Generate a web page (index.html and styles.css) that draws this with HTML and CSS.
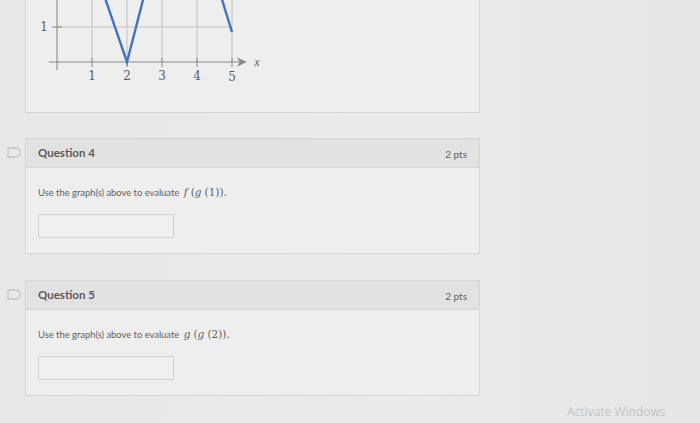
FILE: index.html
```
<!DOCTYPE html>
<html>
<head>
<meta charset="utf-8">
<link rel="stylesheet" href="styles.css">
</head>
<body>
<div class="page">
  <div class="row">
    <div class="gutter"></div>
    <div class="card graph-card">
      <svg class="graph" width="455" height="112" viewBox="25 0 455 112">
        <g class="grid">
          <line x1="91" y1="0" x2="91" y2="62"/>
          <line x1="126" y1="0" x2="126" y2="62"/>
          <line x1="161" y1="0" x2="161" y2="62"/>
          <line x1="196" y1="0" x2="196" y2="62"/>
          <line x1="231" y1="0" x2="231" y2="62"/>
          <line x1="56" y1="27" x2="231" y2="27"/>
        </g>
        <g class="axis">
          <line x1="48" y1="62" x2="238" y2="62"/>
          <line x1="56" y1="0" x2="56" y2="70"/>
          <line x1="91" y1="58" x2="91" y2="67"/>
          <line x1="126" y1="58" x2="126" y2="67"/>
          <line x1="161" y1="58" x2="161" y2="67"/>
          <line x1="196" y1="58" x2="196" y2="67"/>
          <line x1="231" y1="58" x2="231" y2="67"/>
          <line x1="51" y1="27" x2="61" y2="27"/>
        </g>
        <polygon class="arrow" points="236,57.5 246,62 236,66.5 238.5,62"/>
        <g class="lbl">
          <text x="91" y="80">1</text>
          <text x="126" y="80">2</text>
          <text x="161" y="80">3</text>
          <text x="196" y="80">4</text>
          <text x="231" y="81">5</text>
          <text x="43" y="31">1</text>
          <text class="var" x="256" y="66">x</text>
        </g>
        <polyline class="fn" points="104,-2 126,62 142.5,-2"/>
        <polyline class="fn" points="220.5,-2 231,32"/>
      </svg>
    </div>
  </div>

  <div class="row q">
    <div class="gutter">
      <svg class="flag" width="14" height="11" viewBox="0 0 14 11"><path d="M1 1 H8.5 Q13 1 13 5.5 Q13 10 8.5 10 H1 Z"/></svg>
    </div>
    <div class="card">
      <div class="head"><span class="title">Question 4</span><span class="pts">2 pts</span></div>
      <div class="body">
        <p class="text">Use the graph(s) above to evaluate <span class="math"><i>f</i>&#8201;(<i>g</i>&#8201;(1)).</span></p>
        <div class="input"></div>
      </div>
    </div>
  </div>

  <div class="row q">
    <div class="gutter">
      <svg class="flag" width="14" height="11" viewBox="0 0 14 11"><path d="M1 1 H8.5 Q13 1 13 5.5 Q13 10 8.5 10 H1 Z"/></svg>
    </div>
    <div class="card">
      <div class="head"><span class="title">Question 5</span><span class="pts">2 pts</span></div>
      <div class="body">
        <p class="text">Use the graph(s) above to evaluate <span class="math"><i>g</i>&#8201;(<i>g</i>&#8201;(2)).</span></p>
        <div class="input"></div>
      </div>
    </div>
  </div>
</div>
<div class="activate">Activate Windows</div>
</body>
</html>
```
FILE: styles.css
```
html, body {
  margin: 0;
  padding: 0;
}
body {
  width: 700px;
  height: 423px;
  overflow: hidden;
  background: linear-gradient(90deg, #e8e8e8 0%, #ebebeb 60%, #e7e6e6 100%);
  font-family: Lato, "Open Sans", sans-serif;
  color: #5a5a5a;
  position: relative;
}
.page {
  display: flex;
  flex-direction: column;
}
.row {
  display: flex;
}
.row.q {
  margin-top: 25px;
}
.row.q + .row.q {
  margin-top: 26px;
}
.gutter {
  width: 25px;
  flex: none;
  display: flex;
  justify-content: flex-start;
  padding-left: 7px;
  box-sizing: border-box;
}
.flag {
  margin-top: 9px;
  display: block;
}
.flag path {
  fill: none;
  stroke: #c4c4c4;
  stroke-width: 1.3;
}
.card {
  width: 455px;
  box-sizing: border-box;
  border: 1px solid #d5d5d5;
  background: #eeeeee;
}
.graph-card {
  border-top: none;
  height: 113px;
}
.graph {
  display: block;
}
.grid line {
  stroke: #c2c2c2;
  stroke-width: 1;
}
.axis line {
  stroke: #8a8a8a;
  stroke-width: 1.1;
}
.arrow {
  fill: #8a8a8a;
}
.lbl text {
  font-family: "DejaVu Serif", "Liberation Serif", serif;
  font-size: 12px;
  fill: #5c5c5c;
  text-anchor: middle;
}
.lbl text.var {
  font-family: "Liberation Serif", serif;
  font-style: italic;
  font-size: 12px;
}
.fn {
  fill: none;
  stroke: #4371c4;
  stroke-width: 2.4;
  stroke-linejoin: miter;
}
.head {
  height: 28px;
  background: #e2e2e2;
  border-bottom: 1px solid #d5d5d5;
  display: flex;
  align-items: center;
  justify-content: space-between;
  padding: 0 12px 0 12px;
}
.title {
  font-size: 11.5px;
  font-weight: bold;
  color: #5b5b5b;
  margin-top: -1px;
}
.pts {
  font-size: 10px;
  color: #5f5f5f;
  margin-top: 2px;
}
.body {
  height: 85px;
  box-sizing: border-box;
  padding: 18px 12px 0 12px;
}
.text {
  margin: 0;
  font-size: 9.4px;
  line-height: 12px;
  color: #5e5e5e;
}
.math {
  font-family: "DejaVu Serif", "Liberation Serif", serif;
  font-size: 10.5px;
  margin-left: 2px;
}
.math i {
  font-style: italic;
  margin-right: 1px;
}
.input {
  margin-top: 15px;
  width: 136px;
  height: 24px;
  box-sizing: border-box;
  border: 1px solid #cfcfcf;
  border-radius: 2px;
  background: #f0f0f0;
}
.activate {
  position: absolute;
  left: 567px;
  top: 403px;
  font-family: "Open Sans", "Noto Sans", sans-serif;
  font-size: 12px;
  color: #c4c4c4;
}
```
